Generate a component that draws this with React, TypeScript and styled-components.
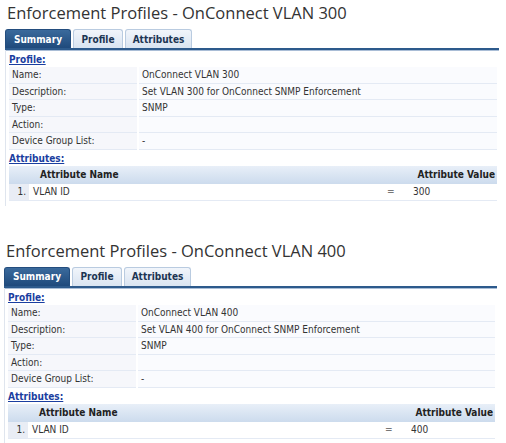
import styled, { createGlobalStyle } from "styled-components";

const GlobalStyle = createGlobalStyle`
  html, body {
    margin: 0;
    padding: 0;
    background: #ffffff;
  }
  body {
    font-family: "DejaVu Sans Condensed", "DejaVu Sans", Verdana, sans-serif;
    font-stretch: condensed;
    font-size: 10px;
    color: #333333;
  }
`;

// Styled
const Page = styled.main`
  display: flex;
  flex-direction: column;
  gap: 33px;
  padding-top: 1px;
`;
const Section = styled.section<{ $left: number; $width: number }>`
  margin-left: ${({ $left }) => $left}px;
  width: ${({ $width }) => $width}px;
`;
const Title = styled.h1`
  margin: 0 0 0 2px;
  font-family: "Open Sans", sans-serif;
  font-stretch: normal;
  font-weight: 400;
  font-size: 16.5px;
  line-height: 24px;
  color: #333333;
  height: 28px;
`;
const TabBar = styled.div`
  display: flex;
  gap: 2px;
  height: 19px;
  border-bottom: 2px solid #2d5a8c;
  box-shadow: 0 1px 0 #a9bdd6;
`;
const Tab = styled.div<{ $active?: boolean; $w: number }>`
  width: ${({ $w }) => $w}px;
  display: flex;
  align-items: center;
  justify-content: center;
  font-weight: bold;
  font-size: 10px;
  border-radius: 3px 3px 0 0;
  color: ${({ $active }) => ($active ? "#ffffff" : "#1c3552")};
  background: ${({ $active }) =>
    $active
      ? "linear-gradient(#3a6a9c, #1f4a7c)"
      : "linear-gradient(#f1f5fb, #d9e4f1)"};
  border: 1px solid ${({ $active }) => ($active ? "#234d7e" : "#b9cbe0")};
  border-bottom: none;
  box-sizing: border-box;
`;
const Panel = styled.div`
  border-left: 1px solid #dfe5ee;
  padding: 3px 2px 5px 3px;
`;
const SectionLink = styled.a`
  display: block;
  font-weight: bold;
  font-size: 10px;
  color: #1a3ea0;
  text-decoration: underline;
  line-height: 13px;
  margin-bottom: 1px;
`;
const InfoTable = styled.div`
  display: grid;
  grid-template-columns: 128px 1fr;
  column-gap: 2px;
  margin-bottom: 2px;
`;
const InfoCell = styled.div<{ $label?: boolean }>`
  height: 15.6px;
  line-height: 15.6px;
  padding-left: 3px;
  background: ${({ $label }) => ($label ? "#f6f7fb" : "#fafbfe")};
  border-bottom: 1px solid #e4eaf4;
  white-space: nowrap;
  overflow: hidden;
`;
const AttrHeader = styled.div`
  display: flex;
  align-items: center;
  justify-content: space-between;
  height: 18px;
  background: linear-gradient(#e8eff8, #ccdbed);
  font-weight: bold;
  color: #222222;
  padding: 0 2px 0 31px;
`;
const AttrRow = styled.div`
  display: flex;
  height: 16px;
  line-height: 16px;
  border-bottom: 1px solid #e4eaf4;
`;
const RowNum = styled.div`
  width: 21px;
  text-align: right;
  padding-right: 3px;
  box-sizing: border-box;
  background: #e9edf5;
  border-right: 1px solid #ffffff;
`;
const AttrName = styled.div`
  flex: 1;
  padding-left: 3px;
`;
const AttrOp = styled.div`
  width: 26px;
  color: #777777;
`;
const AttrValue = styled.div`
  width: 84px;
`;

type Profile = {
  vlan: number;
  left: number;
  width: number;
};

const profiles: Profile[] = [
  { vlan: 300, left: 5, width: 494 },
  { vlan: 400, left: 4, width: 493 },
];

const EnforcementProfile = ({ vlan, left, width }: Profile) => {
  const rows: [string, string][] = [
    ["Name:", `OnConnect VLAN ${vlan}`],
    ["Description:", `Set VLAN ${vlan} for OnConnect SNMP Enforcement`],
    ["Type:", "SNMP"],
    ["Action:", ""],
    ["Device Group List:", "-"],
  ];

  return (
    <Section $left={left} $width={width}>
      <Title>Enforcement Profiles - OnConnect VLAN {vlan}</Title>
      <TabBar>
        <Tab $active $w={66}>
          Summary
        </Tab>
        <Tab $w={50}>Profile</Tab>
        <Tab $w={67}>Attributes</Tab>
      </TabBar>
      <Panel>
        <SectionLink>Profile:</SectionLink>
        <InfoTable>
          {rows.flatMap(([label, value]) => [
            <InfoCell $label key={label}>
              {label}
            </InfoCell>,
            <InfoCell key={label + "-v"}>{value}</InfoCell>,
          ])}
        </InfoTable>
        <SectionLink>Attributes:</SectionLink>
        <AttrHeader>
          <span>Attribute Name</span>
          <span>Attribute Value</span>
        </AttrHeader>
        <AttrRow>
          <RowNum>1.</RowNum>
          <AttrName>VLAN ID</AttrName>
          <AttrOp>=</AttrOp>
          <AttrValue>{vlan}</AttrValue>
        </AttrRow>
      </Panel>
    </Section>
  );
};

const App = () => {
  return (
    <>
      <GlobalStyle />
      <Page>
        {profiles.map((p) => (
          <EnforcementProfile key={p.vlan} {...p} />
        ))}
      </Page>
    </>
  );
};

export default App;
